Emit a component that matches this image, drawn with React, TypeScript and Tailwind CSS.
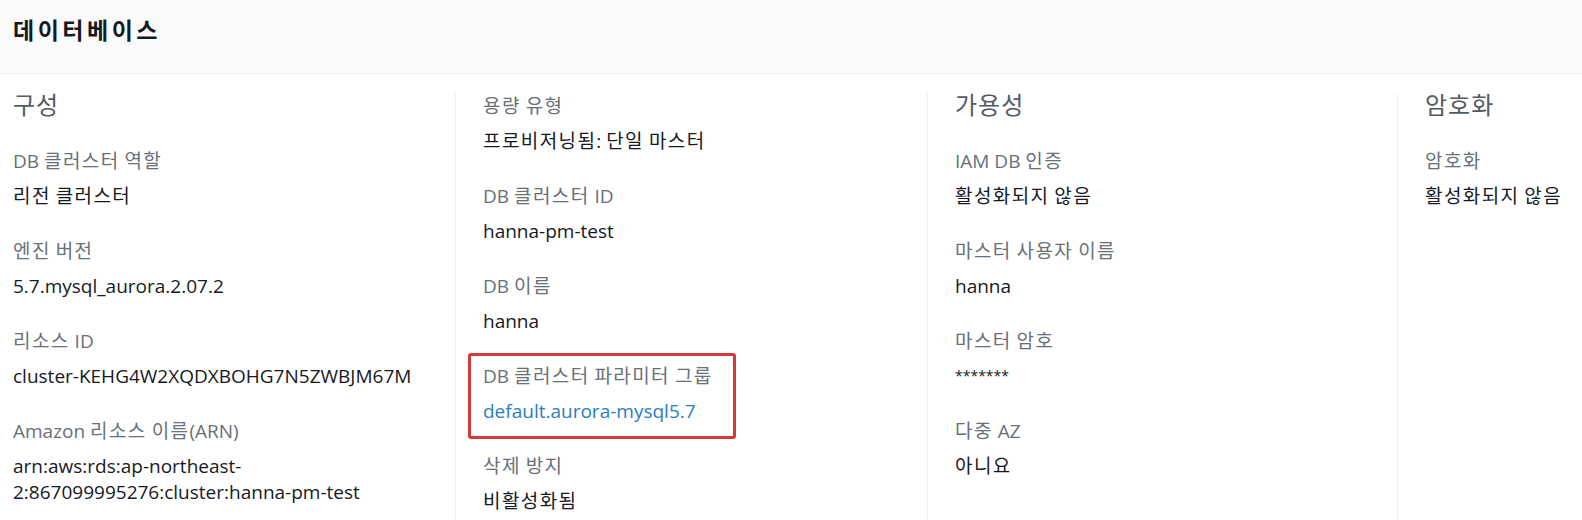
import type { ReactNode } from "react";

type Item = {
  label: string;
  value: string[];
  link?: boolean;
  marked?: boolean;
  masked?: boolean;
};

type Column = {
  title?: string;
  items: Item[];
};

const columns: Column[] = [
  {
    title: "구성",
    items: [
      { label: "DB 클러스터 역할", value: ["리전 클러스터"] },
      { label: "엔진 버전", value: ["5.7.mysql_aurora.2.07.2"] },
      { label: "리소스 ID", value: ["cluster-KEHG4W2XQDXBOHG7N5ZWBJM67M"] },
      {
        label: "Amazon 리소스 이름(ARN)",
        value: ["arn:aws:rds:ap-northeast-", "2:867099995276:cluster:hanna-pm-test"],
      },
    ],
  },
  {
    items: [
      { label: "용량 유형", value: ["프로비저닝됨: 단일 마스터"] },
      { label: "DB 클러스터 ID", value: ["hanna-pm-test"] },
      { label: "DB 이름", value: ["hanna"] },
      {
        label: "DB 클러스터 파라미터 그룹",
        value: ["default.aurora-mysql5.7"],
        link: true,
        marked: true,
      },
      { label: "삭제 방지", value: ["비활성화됨"] },
    ],
  },
  {
    title: "가용성",
    items: [
      { label: "IAM DB 인증", value: ["활성화되지 않음"] },
      { label: "마스터 사용자 이름", value: ["hanna"] },
      { label: "마스터 암호", value: ["*******"], masked: true },
      { label: "다중 AZ", value: ["아니요"] },
    ],
  },
  {
    title: "암호화",
    items: [{ label: "암호화", value: ["활성화되지 않음"] }],
  },
];

// hangul runs get a little extra tracking so they space out like the console font
const kr = (text: string): ReactNode[] =>
  text.split(/([\uac00-\ud7a3]+)/).map((part, i) =>
    /[\uac00-\ud7a3]/.test(part) ? (
      <span key={i} className="tracking-[1.4px]">
        {part}
      </span>
    ) : (
      part
    )
  );

const Field = ({ item }: { item: Item }) => (
  <div className="relative">
    {/* annotation box */}
    {item.marked && (
      <div className="pointer-events-none absolute left-[-15px] top-[-11px] h-[86px] w-[268px] rounded-[3px] border-[3px] border-[#d83a3a]" />
    )}
    <div className="text-[19px] leading-[24px] text-[#687078]">{kr(item.label)}</div>
    <div
      className={`mt-[10px] leading-[26px] ${
        item.masked ? "text-[14px]" : "text-[19px]"
      } ${item.link ? "text-[#2b7dc6]" : "text-[#16191f]"}`}
    >
      {item.value.map((line) => (
        <div key={line}>{kr(line)}</div>
      ))}
    </div>
  </div>
);

export default function App() {
  return (
    <div
      className="w-[1582px] h-[520px] overflow-hidden bg-white"
      style={{ fontFamily: '"Open Sans", "Noto Sans CJK KR", sans-serif' }}
    >
      {/* Header */}
      <div className="flex h-[74px] items-center border-b border-[#eaeded] bg-[#fafafa] px-[13px] pb-[12px]">
        <h2 className="text-[23px] font-bold tracking-[3.5px] text-[#16191f]">데이터베이스</h2>
      </div>

      {/* Details */}
      <div className="grid grid-cols-[455px_472px_470px_1fr] pt-[20px]">
        {columns.map((col, i) => (
          <div
            key={i}
            className={`flex flex-col gap-[30px] pb-[8px] ${
              i === 0 ? "pl-[13px]" : "border-l border-[#eaeded] pl-[27px]"
            }`}
          >
            {col.title && (
              <h3 className="mb-[3px] text-[24px] leading-[22px] tracking-[1px] text-[#545b64]">
                {col.title}
              </h3>
            )}
            {col.items.map((item) => (
              <Field key={item.label} item={item} />
            ))}
          </div>
        ))}
      </div>
    </div>
  );
}
